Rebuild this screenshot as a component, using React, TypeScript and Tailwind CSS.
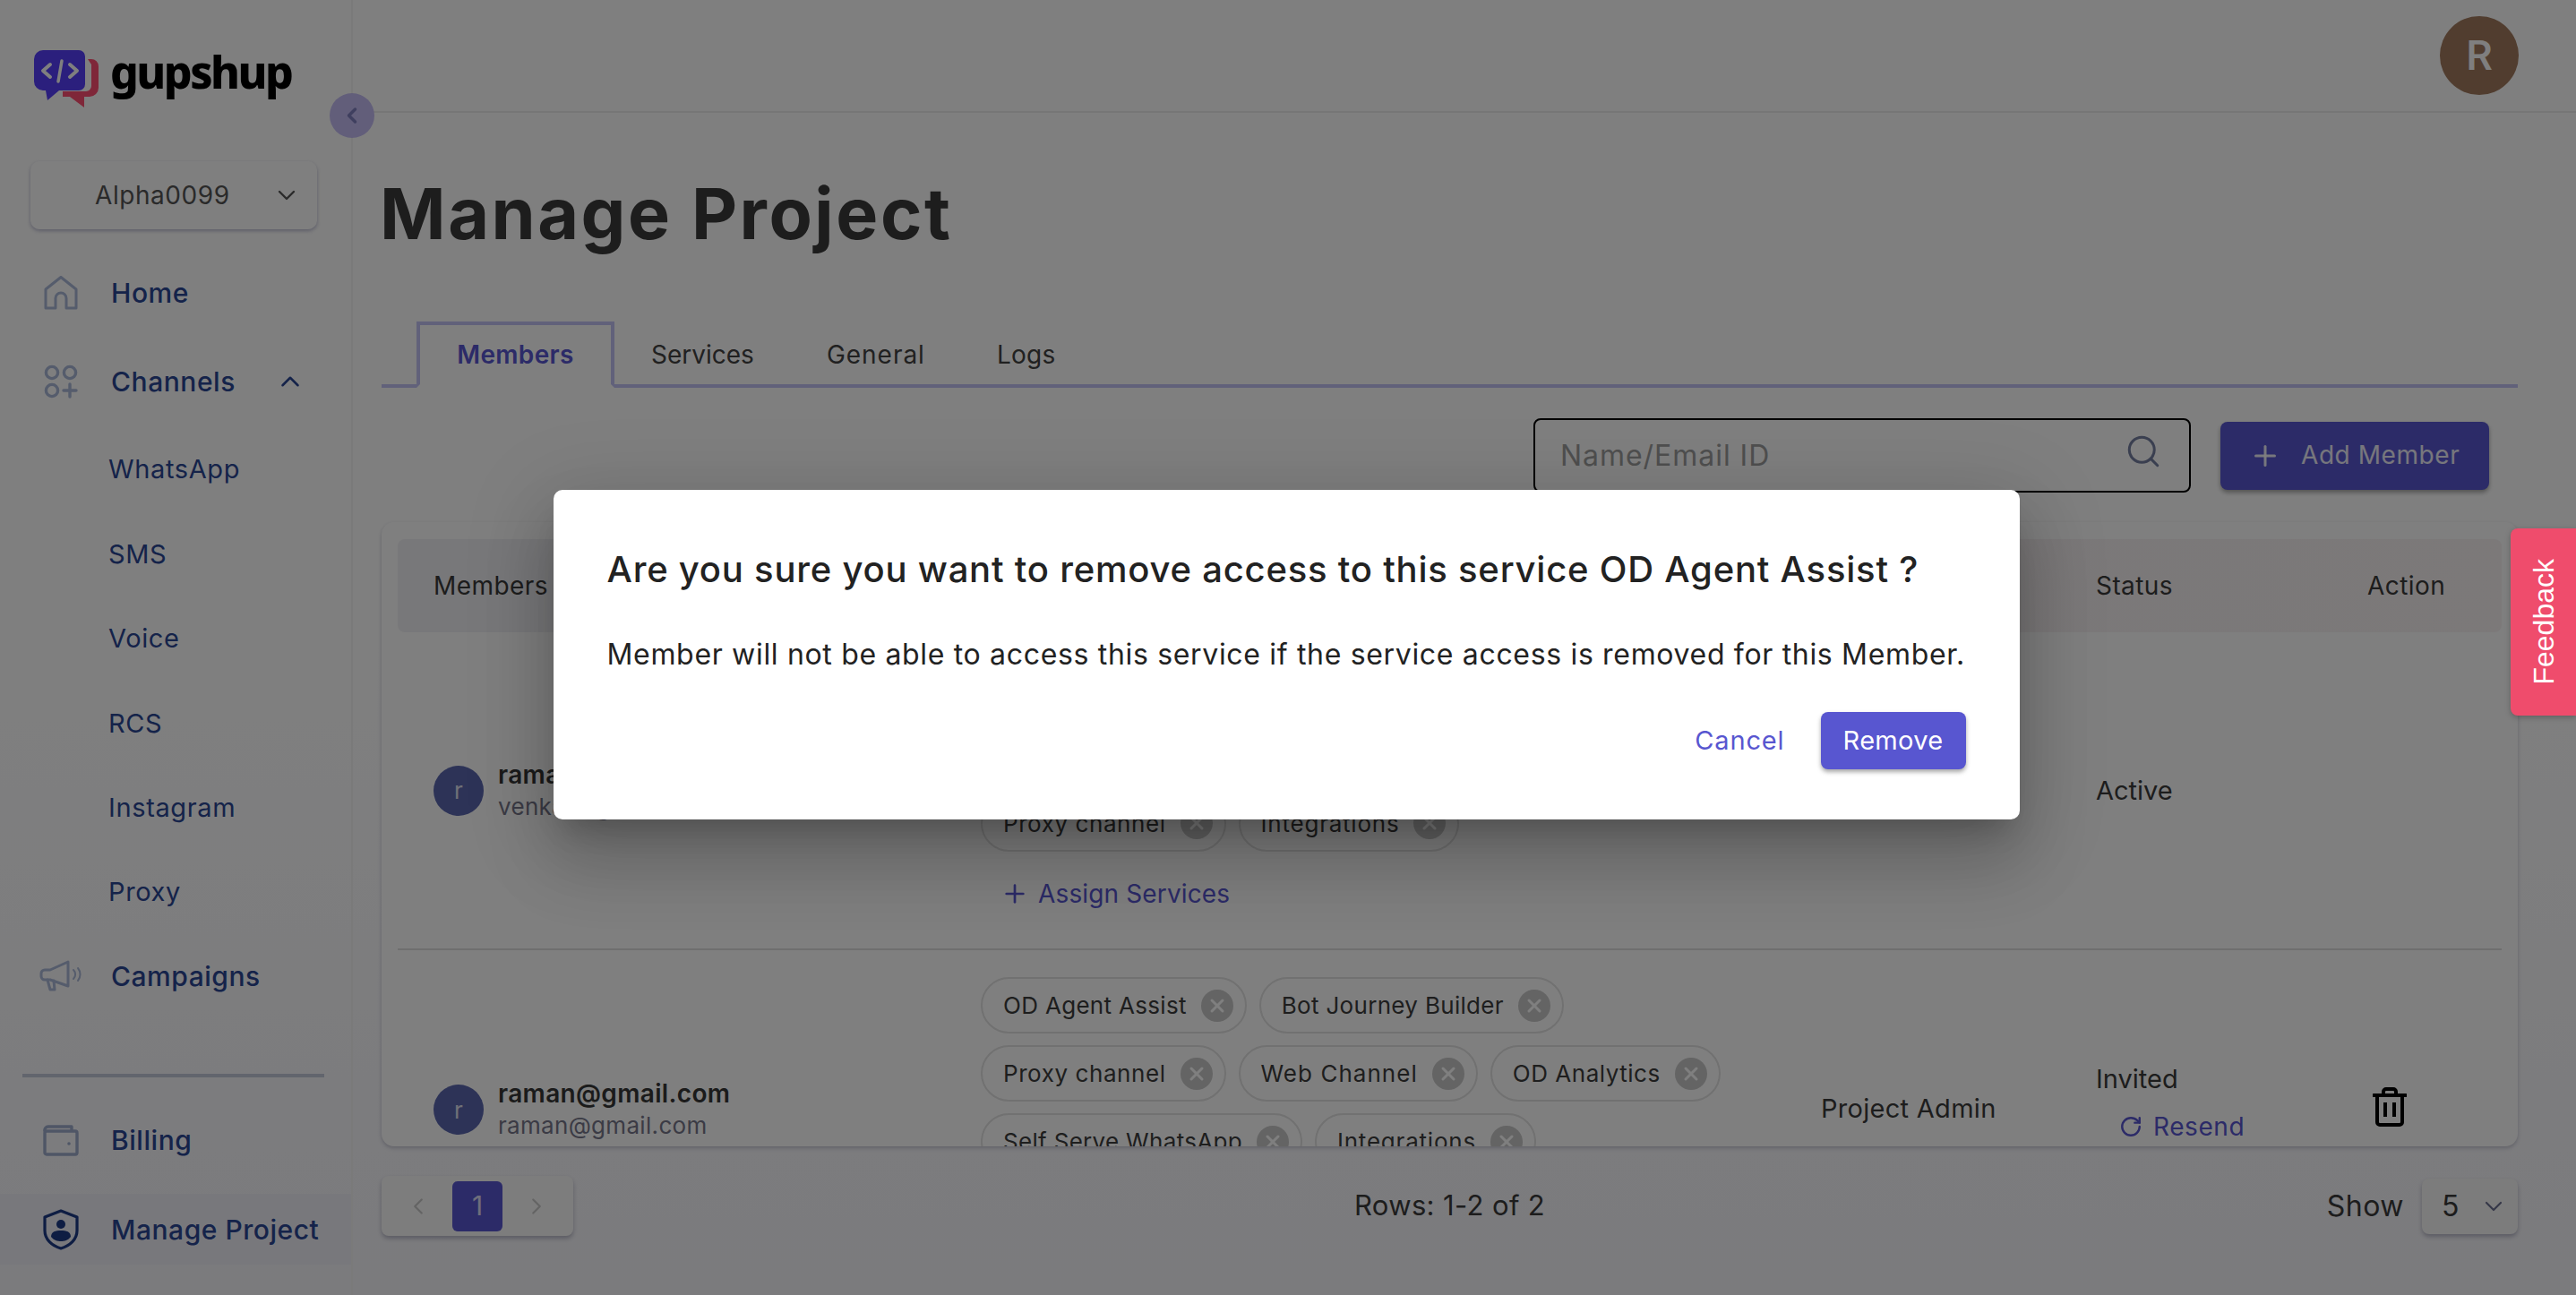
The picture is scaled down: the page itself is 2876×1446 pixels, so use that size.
import { Search, Plus, ChevronDown, ChevronUp, ChevronLeft, ChevronRight, RotateCw, X } from "lucide-react";

function Logo() {
  return (
    <svg width="76" height="66" viewBox="0 0 76 66" className="shrink-0">
      <path d="M60 10 h4 a8 8 0 0 1 8 8 v24 a10 10 0 0 1 -10 10 h-6 v12 l-16 -12 h-8 v-6 h26 a6 6 0 0 0 6 -6 v-24 z" fill="#ff4f72" />
      <path d="M10 0 h40 a7 7 0 0 1 7 7 v31 a7 7 0 0 1 -7 7 h-22 l-13 11 l-2 -11 h-3 a10 10 0 0 1 -10 -10 v-25 a10 10 0 0 1 10 -10 z" fill="#573ffa" />
      <path d="M18 16 l-8 7 l8 7 M40 16 l8 7 l-8 7" fill="none" stroke="#fff" strokeWidth="4" strokeLinecap="round" strokeLinejoin="round" />
      <path d="M31 12 l-4 23" fill="none" stroke="#fff" strokeWidth="3.5" strokeLinecap="round" />
    </svg>
  );
}

function HomeIcon() {
  return (
    <svg width="38" height="38" viewBox="0 0 38 38" fill="none" stroke="#aab8d8" strokeWidth="3" strokeLinejoin="round">
      <path d="M2 15 L19 1.5 L36 15 V36 H25 V25 a6 6 0 0 0 -12 0 V36 H2 Z" />
    </svg>
  );
}

function ChannelsIcon() {
  return (
    <svg width="38" height="38" viewBox="0 0 38 38" fill="none" stroke="#aab8d8" strokeWidth="3.4">
      <circle cx="9" cy="9" r="6.6" />
      <circle cx="29" cy="9" r="6.6" />
      <circle cx="9" cy="29" r="6.6" />
      <path d="M29 22 V36 M22 29 H36" strokeLinecap="round" />
    </svg>
  );
}

function CampaignIcon() {
  return (
    <svg width="48" height="36" viewBox="0 0 48 36" fill="none" stroke="#aab8d8" strokeWidth="3" strokeLinejoin="round" strokeLinecap="round">
      <path d="M32 2 L12 11 H6 a4 4 0 0 0 -4 4 v3 a4 4 0 0 0 4 4 h6 L32 29 Z" />
      <path d="M9 22 l3 11 h5 l-1 -10" />
      <path d="M38 11 a7 7 0 0 1 0 10 M43 9 a11 11 0 0 1 0 14" strokeWidth="2" />
    </svg>
  );
}

function WalletIcon() {
  return (
    <svg width="40" height="36" viewBox="0 0 40 36" fill="none" stroke="#9eaccc" strokeWidth="3.4" strokeLinejoin="round">
      <path d="M2 8 a4 4 0 0 1 4 -5 h26 v5" />
      <rect x="2" y="8" width="36" height="26" rx="2" />
      <circle cx="29" cy="22" r="1.8" fill="#9eaccc" stroke="none" />
    </svg>
  );
}

function ShieldIcon() {
  return (
    <svg width="42" height="46" viewBox="0 0 42 46" fill="none">
      <path d="M21 2 L39 9 V24 C39 34 31 41 21 44 C11 41 3 34 3 24 V9 Z" stroke="#1c3a86" strokeWidth="3.2" strokeLinejoin="round" />
      <circle cx="21" cy="17" r="5" fill="#1c3a86" />
      <path d="M10 31 C10 25 15 24 21 24 C27 24 32 25 32 31 C29 35 25 36 21 36 C17 36 13 35 10 31 Z" fill="#1c3a86" />
    </svg>
  );
}

function TrashIcon() {
  return (
    <svg width="38" height="44" viewBox="0 0 38 44" fill="none" stroke="#000" strokeWidth="4">
      <path d="M1 9 H37" strokeLinecap="round" />
      <path d="M12 8 V5 a3 3 0 0 1 3 -3 h8 a3 3 0 0 1 3 3 V8" />
      <path d="M5 9 V39 a3 3 0 0 0 3 3 h22 a3 3 0 0 0 3 -3 V9" />
      <path d="M14 17 V33 M24 17 V33" />
    </svg>
  );
}

function NavItem({ icon, label }: { icon: React.ReactNode; label: string }) {
  return (
    <div className="flex items-center h-full">
      <div className="w-[124px] shrink-0 pl-[43px]">
        <div className="w-[50px] flex justify-center">{icon}</div>
      </div>
      <span className="text-[30px] font-medium text-[#2a4694] tracking-[0.018em] mt-[1px]">{label}</span>
    </div>
  );
}

const chipTrack: Record<string, string> = {
  "Proxy channel": "tracking-[0.022em]",
  "Web Channel": "tracking-[0.04em]",
  "OD Analytics": "tracking-[0.02em]",
  "Integrations": "tracking-[0.03em]",
};

function Chip({ label }: { label: string }) {
  return (
    <div className="h-[63px] rounded-full border-2 border-[#e2e2e2] flex items-center pl-[23px] pr-[13px] gap-[16px] shrink-0">
      <span className={`text-[26px] text-[#3c3c3c] whitespace-nowrap ${chipTrack[label] ?? "tracking-[0.012em]"}`}>{label}</span>
      <span className="w-[36px] h-[36px] rounded-full bg-[#c8c8c8] flex items-center justify-center shrink-0">
        <X size={24} strokeWidth={3} className="text-white" />
      </span>
    </div>
  );
}

function ChipRows({ rows }: { rows: string[][] }) {
  return (
    <div className="flex flex-col gap-[13px]">
      {rows.map((r, i) => (
        <div key={i} className="flex gap-[14px]">
          {r.map((c) => (
            <Chip key={c} label={c} />
          ))}
        </div>
      ))}
      <div className="flex items-center h-[52px] mt-[8px] pl-[22px] gap-[10px] text-[#5856d0]">
        <Plus size={32} strokeWidth={2} />
        <span className="text-[28px] tracking-[0.005em]">Assign Services</span>
      </div>
    </div>
  );
}

const rowGrid = "grid grid-cols-[611px_938px_307px_303px_1fr] pl-[40px] items-center";

export default function App() {
  const subs = ["WhatsApp", "SMS", "Voice", "RCS", "Instagram", "Proxy"];
  return (
    <div className="relative w-[2876px] h-[1446px] overflow-hidden flex bg-gradient-to-b from-white via-white to-[#f6f6fb] font-[Inter] text-[#3a3a3a]">
      {/* Sidebar */}
      <aside className="w-[394px] shrink-0 border-r-2 border-[#f4f4f4] flex flex-col">
        <div className="h-[180px] pt-[56px] pl-[38px] flex items-start gap-[6px]">
          <Logo />
          <span className="text-[50px] leading-[52px] font-extrabold text-black tracking-[-0.05em] font-['Noto_Sans'] ml-[3px] -mt-[2px]">gupshup</span>
        </div>
        <div className="ml-[34px] w-[320px] h-[76px] rounded-[10px] bg-white shadow-[0_2px_4px_rgba(60,60,120,0.35)] flex items-center pl-[72px] pr-[18px] justify-between">
          <span className="text-[28px] text-[#555] tracking-[0.02em]">Alpha0099</span>
          <ChevronDown size={32} strokeWidth={1.8} className="text-[#555]" />
        </div>
        <div className="h-[22px]" />
        <div className="h-[98px]"><NavItem icon={<HomeIcon />} label="Home" /></div>
        <div className="h-[100px] relative">
          <NavItem icon={<ChannelsIcon />} label="Channels" />
          <ChevronUp size={34} strokeWidth={1.8} className="absolute left-[307px] top-[33px] text-[#2a4694]" />
        </div>
        <div className="flex flex-col pl-[121px]">
          {subs.map((s) => (
            <div key={s} className="h-[94.4px] pt-[2px] flex items-center text-[29px] text-[#2a4694] tracking-[0.022em]">{s}</div>
          ))}
        </div>
        <div className="h-[96px]"><NavItem icon={<CampaignIcon />} label="Campaigns" /></div>
        <div className="mt-[61px] ml-[25px] mr-[30px] h-[4px] bg-[#c4cada]" />
        <div className="h-[30px]" />
        <div className="h-[79px]"><NavItem icon={<WalletIcon />} label="Billing" /></div>
        <div className="h-[21px]" />
        <div className="h-[79px] bg-[#f0f0f8]"><NavItem icon={<ShieldIcon />} label="Manage Project" /></div>
      </aside>

      {/* Main */}
      <main className="flex-1 min-w-0 flex flex-col">
        <header className="h-[126px] shrink-0 border-b-2 border-[#ececec] flex items-center justify-end pr-[64px]">
          <div className="w-[88px] h-[88px] rounded-full bg-[#a27a5e] flex items-center justify-center text-[47px] font-medium text-white font-['Roboto']">R</div>
        </header>
        <div className="flex-1 min-h-0 pl-[32px] pr-[65px]">
          <h1 className="mt-[52px] h-[120px] leading-[120px] text-[79px] font-bold text-[#3a3a3a] tracking-[0.032em] -ml-[2px]">Manage Project</h1>
          <div className="mt-[61px] h-[74px] border-b-4 border-[#c3c3f5] flex pl-[39px] items-start">
            <div className="w-[221px] h-[74px] border-x-4 border-t-4 border-b-4 border-[#c3c3f5] border-b-white flex items-center justify-center text-[28px] font-semibold text-[#5856d0] tracking-[0.012em]">Members</div>
            <div className="ml-[41px] h-[74px] flex items-center text-[28px] text-[#424242]">Services</div>
            <div className="ml-[81px] h-[74px] flex items-center text-[28px] text-[#424242] tracking-[0.035em]">General</div>
            <div className="ml-[80px] h-[74px] flex items-center text-[28px] text-[#424242] tracking-[0.01em]">Logs</div>
          </div>

          <div className="mt-[34px] flex justify-end items-center pr-[32px] gap-[33px]">
            <div className="w-[734px] h-[83px] rounded-[8px] border-2 border-black flex items-center pl-[28px] pr-[28px] justify-between">
              <span className="text-[32px] text-[#9e9e9e] tracking-[0.03em]">Name/Email ID</span>
              <Search size={42} strokeWidth={1.7} className="text-[#747ea0] -mt-[10px] mr-[2px]" />
            </div>
            <div className="w-[300px] h-[76px] rounded-[8px] bg-[#5856d0] shadow-[0_3px_5px_rgba(0,0,0,0.35)] flex items-center pl-[32px] gap-[22px] text-white/90">
              <Plus size={36} strokeWidth={2} />
              <span className="text-[28px] tracking-[0.02em] -mt-[2px]">Add Member</span>
            </div>
          </div>

          <div className="mt-[33px] h-[697px] rounded-[14px] bg-white shadow-[0_2px_4px_rgba(40,40,80,0.25)] overflow-hidden pt-[19px] px-[18px]">
            <div className={`${rowGrid} h-[104px] rounded-[8px] bg-gradient-to-r from-[#f0f0f4] to-[#f8f2f3] text-[28px] text-[#3a3a3a] tracking-[0.015em]`}>
              <span>Members</span>
              <span>Services</span>
              <span>Role</span>
              <span>Status</span>
              <span>Action</span>
            </div>
            <div className={`${rowGrid} h-[355px] border-b-2 border-[#dedede]`}>
              <div className="flex items-center gap-[16px]">
                <div className="w-[56px] h-[56px] rounded-full bg-[#5a66ae] flex items-center justify-center text-[26px] text-white/80">r</div>
                <div className="flex flex-col">
                  <span className="text-[28px] font-semibold text-[#363636] leading-[36px] tracking-[0.012em]">raman@gmail.com</span>
                  <span className="text-[26px] text-[#76768a] leading-[36px] tracking-[0.012em]">venkat@gmail.com</span>
                </div>
              </div>
              <div className="pb-[6px]">
                <ChipRows rows={[["OD Agent Assist", "Bot Journey Builder"], ["Web Channel", "OD Analytics"], ["Proxy channel", "Integrations"]]} />
              </div>
              <span className="text-[29px] text-[#3a3a3a]">Project Admin</span>
              <span className="text-[29px] text-[#3a3a3a]">Active</span>
              <span />
            </div>
            <div className={`${rowGrid} pt-[30px] !items-start`}>
              <div className="flex items-center gap-[16px] mt-[112px]">
                <div className="w-[56px] h-[56px] rounded-full bg-[#5a66ae] flex items-center justify-center text-[26px] text-white/80">r</div>
                <div className="flex flex-col">
                  <span className="text-[28px] font-semibold text-[#363636] leading-[36px] tracking-[0.012em]">raman@gmail.com</span>
                  <span className="text-[26px] text-[#76768a] leading-[36px] tracking-[0.012em]">raman@gmail.com</span>
                </div>
              </div>
              <ChipRows rows={[["OD Agent Assist", "Bot Journey Builder"], ["Proxy channel", "Web Channel", "OD Analytics"], ["Self Serve WhatsApp", "Integrations"]]} />
              <span className="text-[29px] text-[#3a3a3a] mt-[125px] tracking-[0.01em]">Project Admin</span>
              <div className="mt-[92px] flex flex-col">
                <span className="text-[29px] text-[#3a3a3a]">Invited</span>
                <div className="flex items-center gap-[12px] mt-[10px] ml-[26px] text-[#5856d0]">
                  <RotateCw size={26} strokeWidth={2.2} />
                  <span className="text-[28px] tracking-[0.02em]">Resend</span>
                </div>
              </div>
              <div className="mt-[123px] ml-[6px]"><TrashIcon /></div>
            </div>
          </div>

          <div className="mt-[33px] grid grid-cols-3 items-center">
            <div className="w-[214px] h-[67px] rounded-[8px] bg-[#fbfbfb] shadow-[0_3px_5px_rgba(40,40,80,0.3)] flex items-center justify-between px-[26px]">
              <ChevronLeft size={30} strokeWidth={1.8} className="text-[#c8c8c8]" />
              <div className="w-[56px] h-[56px] rounded-[6px] bg-[#5856d0] flex items-center justify-center text-[30px] text-white/80">1</div>
              <ChevronRight size={30} strokeWidth={1.8} className="text-[#c8c8c8]" />
            </div>
            <div className="text-center text-[31px] text-[#3a3a3a] tracking-[0.012em]">Rows: 1-2 of 2</div>
            <div className="flex justify-end items-center gap-[20px]">
              <span className="text-[32px] text-[#3a3a3a] tracking-[0.015em]">Show</span>
              <div className="w-[107px] h-[62px] rounded-[8px] bg-[#f8f8f8] shadow-[0_3px_5px_rgba(40,40,80,0.3)] flex items-center justify-between pl-[22px] pr-[11px]">
                <span className="text-[32px] text-[#3a3a3a]">5</span>
                <ChevronDown size={32} strokeWidth={1.6} className="text-[#6a6f90]" />
              </div>
            </div>
          </div>
        </div>
      </main>

      {/* Collapse toggle */}
      <div className="absolute left-[368px] top-[104px] w-[50px] h-[50px] rounded-full bg-[#c4bcf4] flex items-center justify-center">
        <ChevronLeft size={28} strokeWidth={3} className="text-[#7e7ebe]" />
      </div>

      {/* Modal overlay */}
      <div className="absolute inset-0 z-10 bg-black/50 flex items-center justify-center">
        <div className="w-[1637px] h-[368px] mt-[15px] mr-[4px] rounded-[10px] bg-white shadow-[0_22px_30px_-14px_rgba(0,0,0,0.2),0_48px_76px_6px_rgba(0,0,0,0.14),0_18px_92px_16px_rgba(0,0,0,0.12)] flex flex-col pl-[60px] pr-[60px]">
          <div className="mt-[60px] h-[58px] flex items-center text-[40px] font-medium text-[#222] tracking-[0.0195em] whitespace-nowrap">Are you sure you want to remove access to this service OD Agent Assist ?</div>
          <div className="mt-[46px] h-[40px] flex items-center text-[32px] text-[#222] tracking-[0.021em] whitespace-nowrap">Member will not be able to access this service if the service access is removed for this Member.</div>
          <div className="mt-[44px] flex justify-end items-center gap-[40px]">
            <span className="text-[29px] text-[#5856d0] tracking-[0.03em]">Cancel</span>
            <div className="w-[162px] h-[64px] rounded-[8px] bg-[#5856d0] shadow-[0_3px_5px_rgba(0,0,0,0.35)] flex items-center justify-center text-[29px] text-white tracking-[0.01em]">Remove</div>
          </div>
        </div>
      </div>

      {/* Feedback */}
      <div className="absolute z-20 right-0 top-[590px] w-[73px] h-[209px] rounded-l-[8px] bg-[#ef4c6c] shadow-[0_2px_6px_rgba(0,0,0,0.25)] flex items-center justify-center">
        <span className="[writing-mode:vertical-rl] rotate-180 text-[32px] text-white font-['Liberation_Sans']">Feedback</span>
      </div>
    </div>
  );
}
